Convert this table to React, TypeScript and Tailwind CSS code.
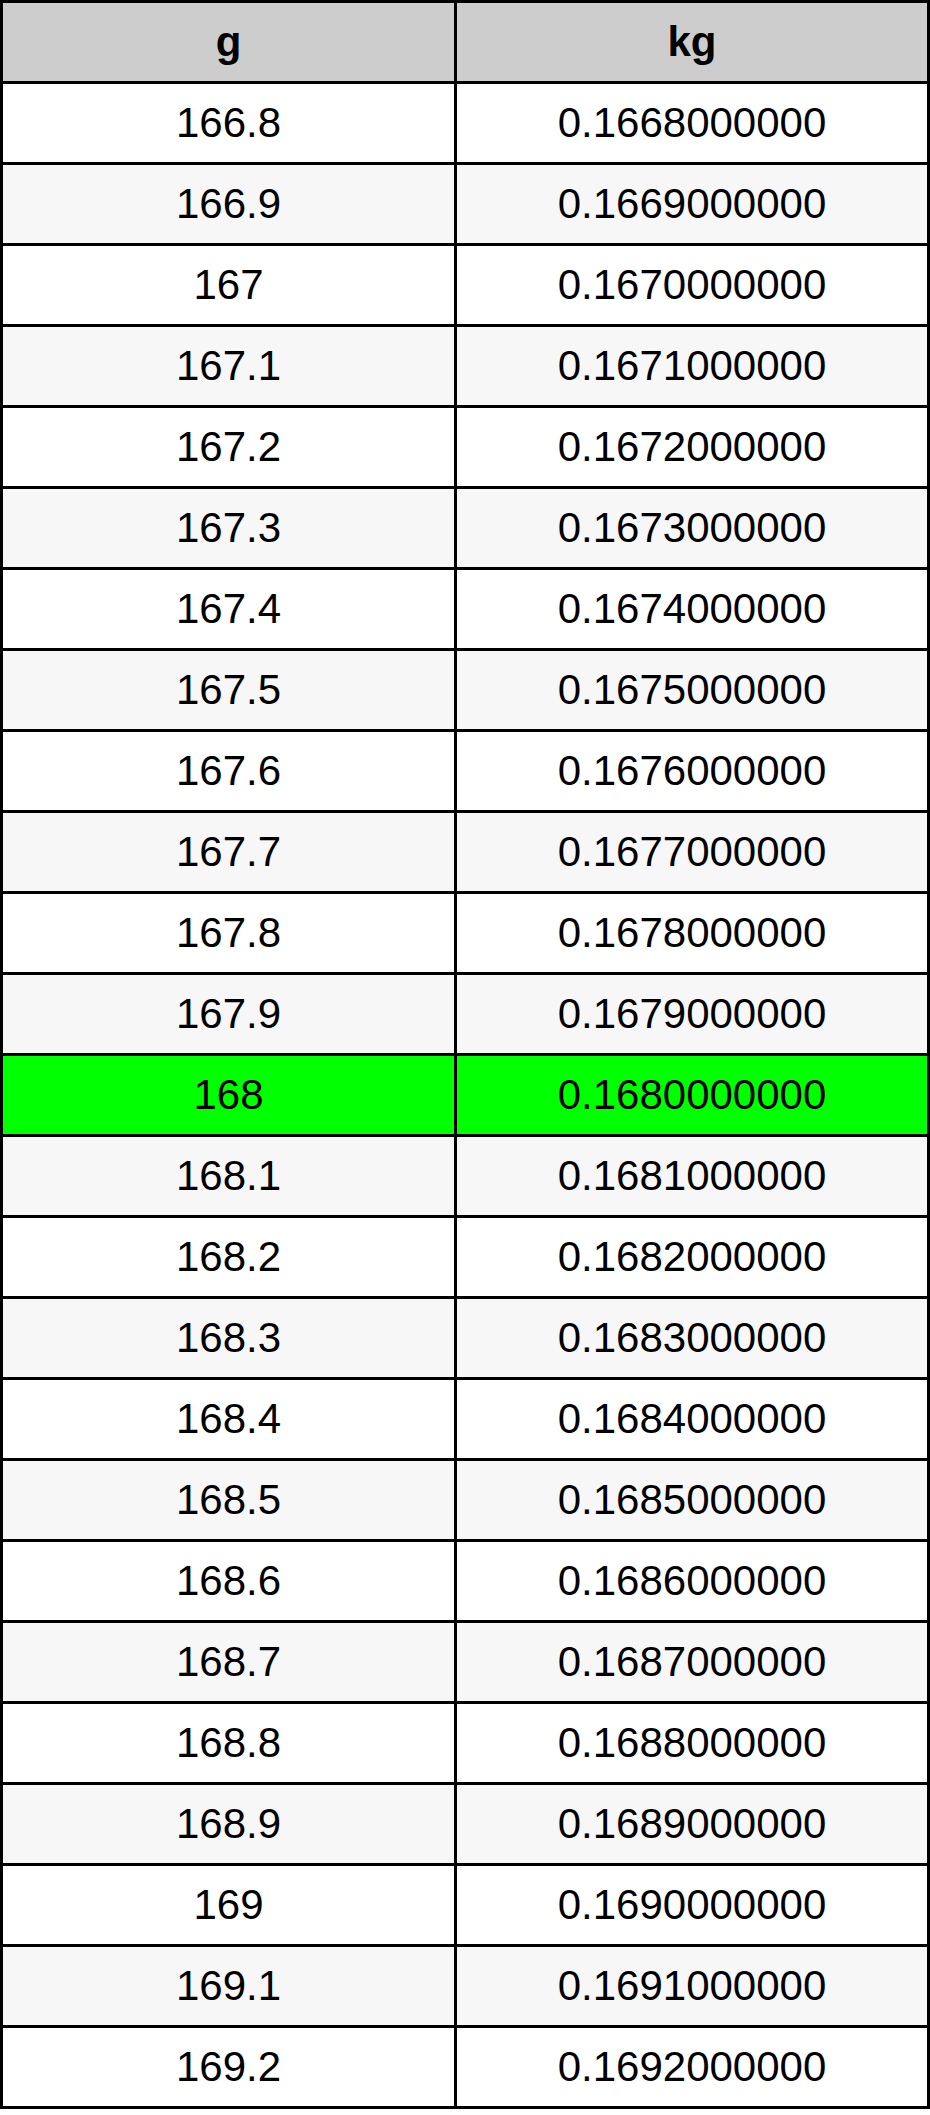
import React from "react";

const rows: [string, string][] = [];
for (let i = 0; i < 25; i++) {
  const g = 1668 + i;
  const gStr = g % 10 === 0 ? String(g / 10) : (g / 10).toFixed(1);
  const kg = "0." + String(g) + "000000";
  rows.push([gStr, kg]);
}

export default function App() {
  return (
    <div className="w-[930px] bg-white" style={{ fontFamily: '"Liberation Sans", Arial, sans-serif' }}>
      <div className="grid grid-cols-[454px_473px] border-t-[3px] border-l-[3px] border-black text-black text-[42px] leading-none">
        <div className="h-[81px] flex items-center justify-center bg-[#cdcdcd] border-r-[3px] border-b-[3px] border-black font-bold">g</div>
        <div className="h-[81px] flex items-center justify-center bg-[#cdcdcd] border-r-[3px] border-b-[3px] border-black font-bold">kg</div>
        {rows.map(([g, kg], i) => {
          const bg = g === "168" ? "bg-[#00ff00]" : i % 2 === 1 ? "bg-[#f7f7f7]" : "bg-white";
          return (
            <React.Fragment key={g}>
              <div className={`h-[81px] flex items-center justify-center border-r-[3px] border-b-[3px] border-black ${bg}`}>{g}</div>
              <div className={`h-[81px] flex items-center justify-center border-r-[3px] border-b-[3px] border-black ${bg}`}>{kg}</div>
            </React.Fragment>
          );
        })}
      </div>
    </div>
  );
}
